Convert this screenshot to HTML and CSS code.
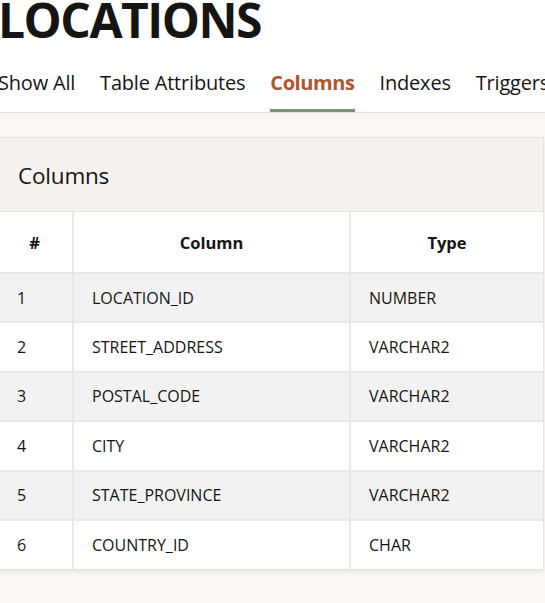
FILE: index.html
```html
<!DOCTYPE html>
<html lang="en">

<head>
    <meta charset="UTF-8">
    <meta name="viewport" content="width=device-width, initial-scale=1.0">
    <title>LOCATIONS</title>
    <link rel="stylesheet" href="styles.css">
</head>

<body>
    <div class="page-top">
        <h1 class="page-title">LOCATIONS</h1>
        <ul class="tabs">
            <li class="tab">Show All</li>
            <li class="tab">Table Attributes</li>
            <li class="tab active">Columns</li>
            <li class="tab">Indexes</li>
            <li class="tab">Triggers</li>
        </ul>
    </div>

    <div class="content">
        <div class="card">
            <div class="card-head">Columns</div>
            <table class="cols">
                <thead>
                    <tr>
                        <th class="c-num">#</th>
                        <th class="c-name">Column</th>
                        <th class="c-type">Type</th>
                    </tr>
                </thead>
                <tbody>
                    <tr><td>1</td><td>LOCATION_ID</td><td>NUMBER</td></tr>
                    <tr><td>2</td><td>STREET_ADDRESS</td><td>VARCHAR2</td></tr>
                    <tr><td>3</td><td>POSTAL_CODE</td><td>VARCHAR2</td></tr>
                    <tr><td>4</td><td>CITY</td><td>VARCHAR2</td></tr>
                    <tr><td>5</td><td>STATE_PROVINCE</td><td>VARCHAR2</td></tr>
                    <tr><td>6</td><td>COUNTRY_ID</td><td>CHAR</td></tr>
                </tbody>
            </table>
        </div>
    </div>
</body>

</html>
```

FILE: styles.css
```css
* {
    padding: 0;
    margin: 0;
    list-style: none;
    box-sizing: border-box;
}

html,
body {
    overflow: hidden;
}

body {
    background: #f9f8f6;
    font-family: "Open Sans", "Noto Sans", sans-serif;
    color: #161513;
    height: 603px;
}

/* top area */
.page-top {
    background: #fff;
    border-bottom: 1px solid #e2e1df;
}

.page-title {
    font-size: 48px;
    font-weight: 700;
    line-height: 40px;
    height: 44px;
    margin-left: -2px;
    letter-spacing: -1.5px;
    overflow: hidden;
}

.tabs {
    display: flex;
    margin-top: 24px;
    margin-left: -2px;
    white-space: nowrap;
}

.tab {
    font-size: 20px;
    line-height: 30px;
    padding-bottom: 11px;
    margin-right: 25px;
    letter-spacing: -0.2px;
    border-bottom: 3px solid transparent;
}

.tab.active {
    color: #ad552d;
    font-weight: 700;
    letter-spacing: -0.4px;
    border-bottom-color: #789672;
}

/* card */
.content {
    padding-top: 24px;
}

.card {
    width: 548px;
    margin-left: -4px;
    border: 1px solid #e4e3e1;
    background: #fff;
    box-shadow: 0 2px 4px rgba(0, 0, 0, 0.08);
}

.card-head {
    background: #f4f3f1;
    height: 74px;
    padding-left: 21px;
    font-size: 22.5px;
    line-height: 76px;
    letter-spacing: -0.2px;
    border-bottom: 1px solid #e4e3e1;
}

.cols {
    width: 100%;
    border-collapse: collapse;
    font-size: 16px;
}

.cols th {
    height: 61px;
    font-weight: 700;
    text-align: center;
    font-size: 16.5px;
    border-right: 2px solid #e8e8e8;
}

.cols td {
    height: 49.4px;
    padding-left: 18px;
    border-top: 2px solid #e8e8e8;
    border-right: 2px solid #e8e8e8;
}

.cols td:first-child {
    padding-left: 20px;
}

.cols th:last-child,
.cols td:last-child {
    border-right: 0;
}

.cols tbody tr:nth-child(odd) {
    background: #f2f2f2;
}

.c-num {
    width: 76px;
}

.c-name {
    width: 277px;
}
```
